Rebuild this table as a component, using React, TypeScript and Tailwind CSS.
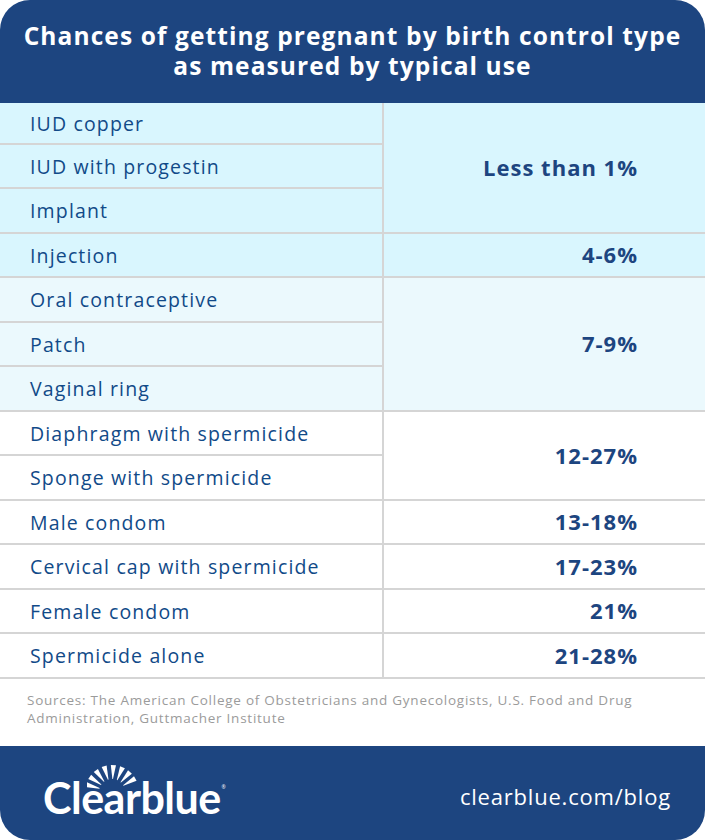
import React from "react";

type Group = { bg: string; labels: string[]; value: string };

const groups: Group[] = [
  { bg: "bg-[#d9f6fe]", labels: ["IUD copper", "IUD with progestin", "Implant"], value: "Less than 1%" },
  { bg: "bg-[#d9f6fe]", labels: ["Injection"], value: "4-6%" },
  { bg: "bg-[#ebf9fd]", labels: ["Oral contraceptive", "Patch", "Vaginal ring"], value: "7-9%" },
  { bg: "bg-white", labels: ["Diaphragm with spermicide", "Sponge with spermicide"], value: "12-27%" },
  { bg: "bg-white", labels: ["Male condom"], value: "13-18%" },
  { bg: "bg-white", labels: ["Cervical cap with spermicide"], value: "17-23%" },
  { bg: "bg-white", labels: ["Female condom"], value: "21%" },
  { bg: "bg-white", labels: ["Spermicide alone"], value: "21-28%" },
];

function Rays() {
  const cx = 25;
  const cy = 30;
  const angles = [164, 146, 127, 107, 87, 67, 48, 30];
  return (
    <svg width="50" height="28" viewBox="0 0 50 28" className="absolute left-[44px] top-[-14px]">
      {angles.map((a, i) => {
        const r1 = 13;
        const r2 = 27;
        const w = 5.5;
        const rad = (a * Math.PI) / 180;
        const wr = (w * Math.PI) / 180;
        const p = (r: number, t: number) => `${cx + r * Math.cos(t)},${cy - r * Math.sin(t)}`;
        return (
          <polygon
            key={i}
            points={`${p(r1, rad - wr * 0.25)} ${p(r2, rad - wr)} ${p(r2, rad + wr)} ${p(r1, rad + wr * 0.25)}`}
            fill="white"
          />
        );
      })}
    </svg>
  );
}

export default function App() {
  let first = true;
  return (
    <div className="w-[705px] h-[840px] bg-white flex flex-col font-['Open_Sans',sans-serif]">
      <div className="h-[103px] bg-[#1d4580] rounded-t-[30px] flex items-center justify-center text-center text-white font-bold text-[24.5px] leading-[30px] tracking-[1.1px] pb-[1px]">
        <div>
          Chances of getting pregnant by birth control type
          <br />
          as measured by typical use
        </div>
      </div>
      <div className="flex flex-col">
        {groups.map((g, gi) => (
          <div key={gi} className={`flex ${g.bg}`}>
            <div className="w-[384px] flex flex-col border-r-2 border-[#d5d5d5]">
              {g.labels.map((l, li) => {
                const h = first ? "h-[41.5px]" : "h-[44.5px]";
                first = false;
                return (
                  <div
                    key={li}
                    className={`${h} border-b-2 border-[#d5d5d5] flex items-center pl-[30px] pt-[1px] text-[19.5px] text-[#114a88] tracking-[1.15px]`}
                  >
                    {l}
                  </div>
                );
              })}
            </div>
            <div className="flex-1 border-b-2 border-[#d5d5d5] flex items-center justify-end pr-[67px] text-[22px] font-bold text-[#1d4580] tracking-[1px]">
              {g.value}
            </div>
          </div>
        ))}
      </div>
      <div className="flex-1 px-[27px] pt-[12px] text-[13.5px] leading-[18px] text-[#9b9b9b] tracking-[0.75px]">
        Sources: The American College of Obstetricians and Gynecologists, U.S. Food and Drug
        <br />
        Administration, Guttmacher Institute
      </div>
      <div className="h-[94px] bg-[#1d4580] rounded-b-[30px] flex items-center justify-between pl-[43px] pr-[34px]">
        <div className="relative mt-[10px]">
          <Rays />
          <span className="text-white font-bold text-[43px] leading-[44px] tracking-[-0.5px] font-['Lato',sans-serif]">
            Clearblue
          </span>
          <span className="absolute right-[-5px] top-[8px] text-white text-[5px]">®</span>
        </div>
        <div className="text-white text-[22px] mt-[6px] tracking-[0.8px]">clearblue.com/blog</div>
      </div>
    </div>
  );
}
